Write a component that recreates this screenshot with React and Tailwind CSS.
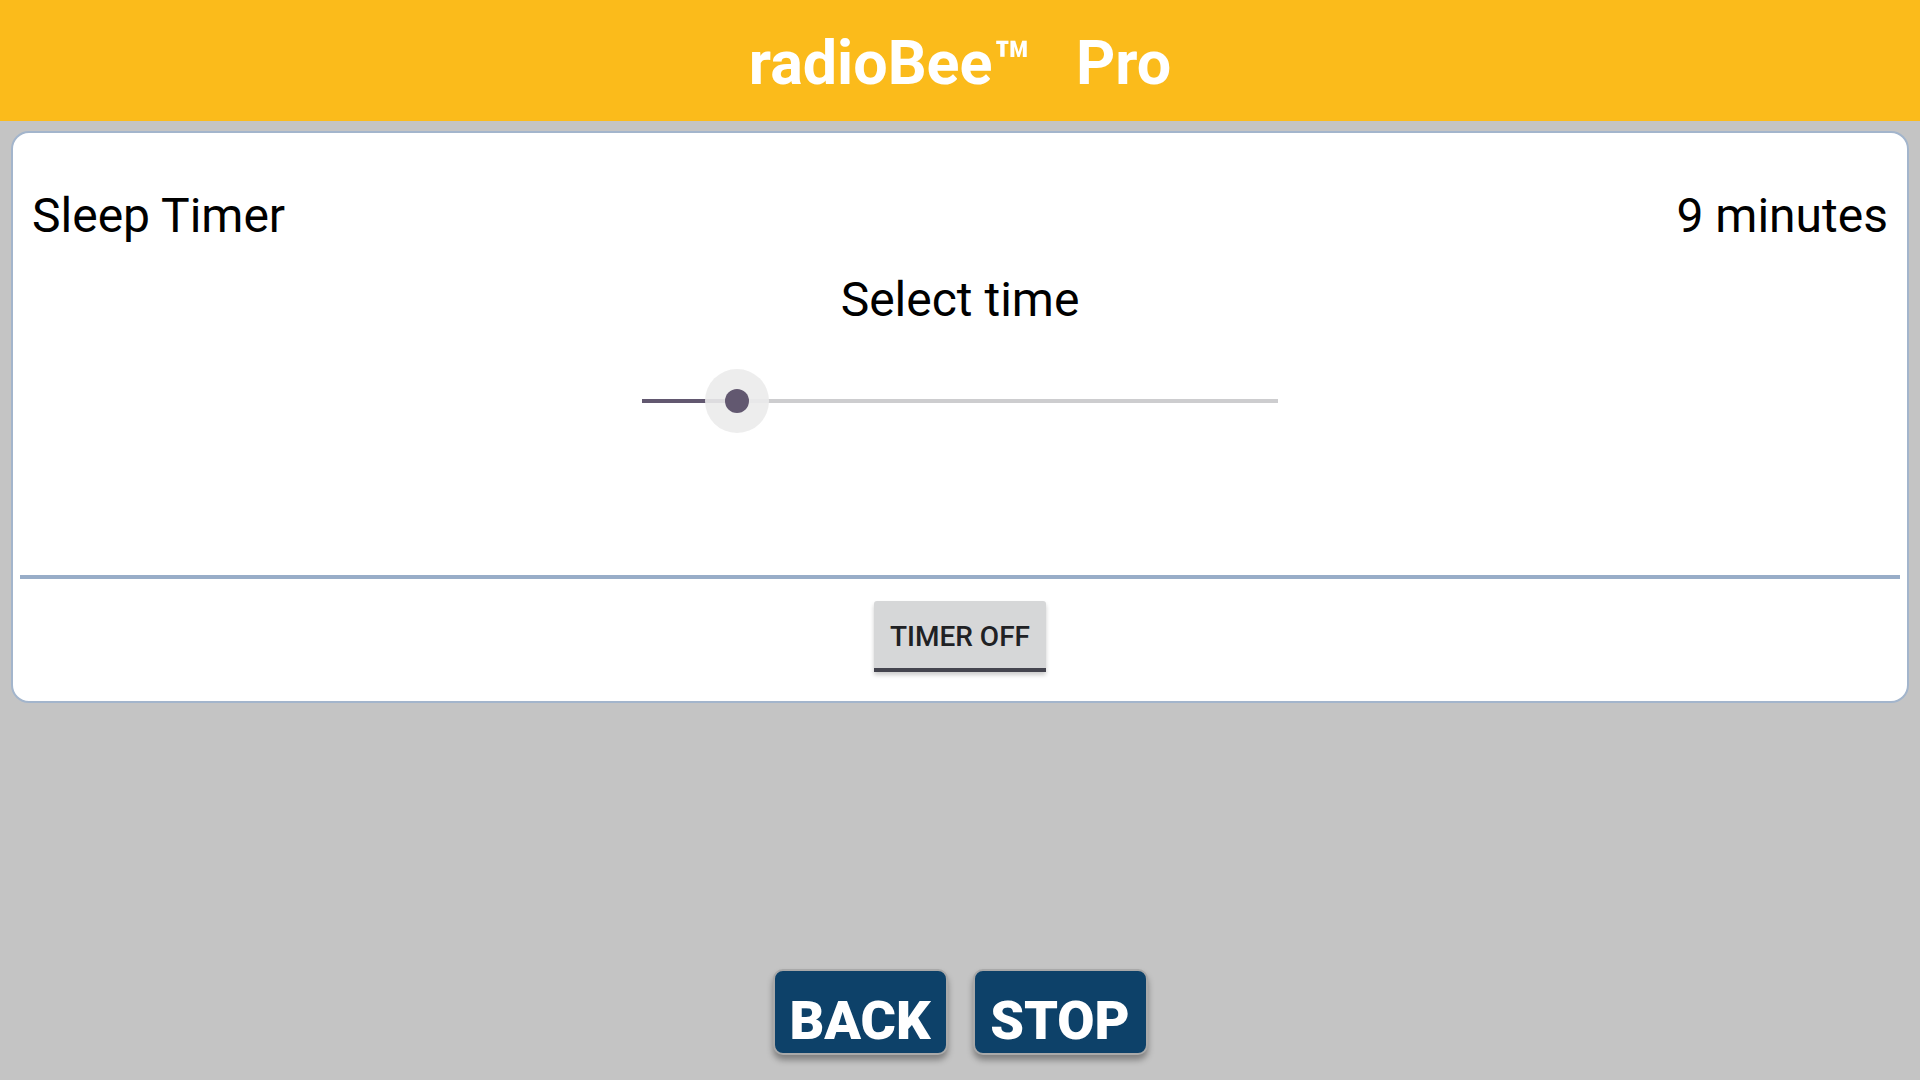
import { useState } from 'react';

const roboto = { fontFamily: 'Roboto, "Liberation Sans", sans-serif' };

function TimeSlider({ value, max }) {
  const pct = (value / max) * 100;
  return (
    <div className="relative mx-auto h-[64px] w-[636px]">
      <div className="absolute left-0 right-0 top-[30px] h-[4px] bg-[#cdcdcf]" />
      <div className="absolute left-0 top-[30px] h-[4px] bg-[#625870]" style={{ width: `${pct}%` }} />
      <div
        className="absolute top-0 flex h-[64px] w-[64px] -translate-x-1/2 items-center justify-center rounded-full bg-[#ebebeb]/90"
        style={{ left: `${pct}%` }}
      >
        <div className="h-[24px] w-[24px] rounded-full bg-[#625870]" />
      </div>
    </div>
  );
}

export default function App() {
  const [minutes, setMinutes] = useState(9);

  return (
    <div className="flex h-screen w-full flex-col bg-[#c4c4c4]" style={roboto}>
      <header className="flex h-[121px] items-center justify-center bg-[#fbbb1b] pt-[6px]">
        <h1 className="flex gap-[45px] text-[61px] font-bold leading-none text-white">
          <span>radioBee™</span>
          <span>Pro</span>
        </h1>
      </header>

      <section className="mx-[11px] mt-[10px] rounded-[18px] border-2 border-[#a3b5cc] bg-white pb-[29px] pt-[59px]">
        <div className="flex items-start justify-between px-[19px] text-[48px] leading-none text-black">
          <span>Sleep Timer</span>
          <span>{minutes} minutes</span>
        </div>
        <p className="mt-[36px] text-center text-[48px] leading-none text-black">Select time</p>
        <div className="mt-[45px]">
          <TimeSlider value={minutes} max={60} />
        </div>
        <div className="mx-[7px] mt-[142px] h-[4px] bg-[#98adc8]" />
        <div className="mt-[22px] flex justify-center">
          <button
            onClick={() => setMinutes(0)}
            className="h-[71px] w-[172px] rounded-t-[3px] border-b-4 border-[#45454f] bg-[#d6d7d8] pt-[5px] text-[28px] font-medium text-[#202124] shadow-[0_3px_4px_rgba(0,0,0,0.2)]"
          >
            TIMER OFF
          </button>
        </div>
      </section>

      <div className="mt-auto flex justify-center gap-[25px] pb-[25px]">
        {['BACK', 'STOP'].map((label) => (
          <button
            key={label}
            className="flex h-[86px] w-[175px] items-center justify-center rounded-[10px] border-2 border-[#a9a9a9] bg-[#0d4169] pt-[18px] text-[54px] font-black leading-none text-white shadow-[0_5px_6px_rgba(0,0,0,0.35)]"
          >
            {label}
          </button>
        ))}
      </div>
    </div>
  );
}
